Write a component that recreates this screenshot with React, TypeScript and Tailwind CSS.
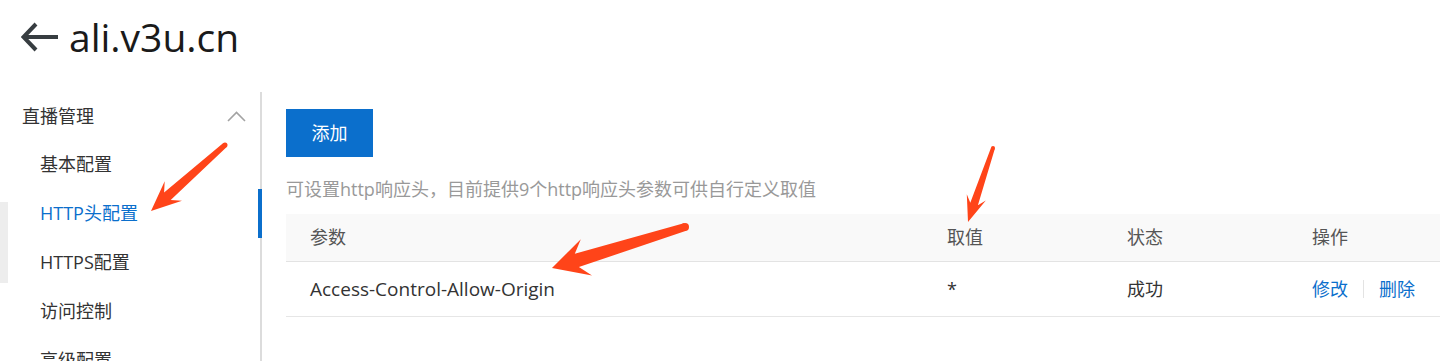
import React from 'react';

type Pt = [number, number];

// red annotation arrow: tapered shaft + barbed head
function arrowPoints(tail: Pt, tip: Pt, headLen: number, headHalf: number, w0: number, w1: number, notch: number) {
  const dx = tip[0] - tail[0];
  const dy = tip[1] - tail[1];
  const len = Math.hypot(dx, dy);
  const ux = dx / len;
  const uy = dy / len;
  const nx = -uy;
  const ny = ux;
  const bx = tip[0] - ux * headLen;
  const by = tip[1] - uy * headLen;
  const jx = bx + ux * notch;
  const jy = by + uy * notch;
  const pts: Pt[] = [
    [tail[0] + (nx * w0) / 2, tail[1] + (ny * w0) / 2],
    [jx + (nx * w1) / 2, jy + (ny * w1) / 2],
    [bx + nx * headHalf, by + ny * headHalf],
    tip,
    [bx - nx * headHalf, by - ny * headHalf],
    [jx - (nx * w1) / 2, jy - (ny * w1) / 2],
    [tail[0] - (nx * w0) / 2, tail[1] - (ny * w0) / 2],
  ];
  return pts.map((p) => `${p[0].toFixed(1)},${p[1].toFixed(1)}`).join(' ');
}

const arrows = [
  { tail: [225, 145] as Pt, tip: [151, 211] as Pt, head: 30, half: 13, w0: 5, w1: 10, notch: 8 },
  { tail: [993, 148] as Pt, tip: [968, 222] as Pt, head: 26, half: 10, w0: 4, w1: 8, notch: 7 },
  { tail: [685, 227] as Pt, tip: [552, 268] as Pt, head: 36, half: 19, w0: 8, w1: 14, notch: 10 },
];

const menu = [
  { label: '基本配置' },
  { label: 'HTTP头配置', active: true },
  { label: 'HTTPS配置' },
  { label: '访问控制' },
  { label: '高级配置' },
];

function Annotations() {
  return (
    <svg className="absolute inset-0 pointer-events-none" width="1440" height="361" viewBox="0 0 1440 361">
      {arrows.map((a, i) => (
        <g key={i} fill="#ff4419">
          <polygon points={arrowPoints(a.tail, a.tip, a.head, a.half, a.w0, a.w1, a.notch)} />
          <circle cx={a.tail[0]} cy={a.tail[1]} r={a.w0 / 2} />
        </g>
      ))}
    </svg>
  );
}

export default function App() {
  return (
    <div className="relative w-[1440px] h-[361px] overflow-hidden bg-white flex flex-col font-['Open_Sans','Noto_Sans_CJK_SC',sans-serif] text-[#333]">
      {/* page title */}
      <div className="h-[92px] shrink-0 pt-[18px] pl-[21px]">
        <div className="flex items-center h-[38px] gap-[11px]">
          <svg width="37" height="30" viewBox="0 0 37 30" fill="none" stroke="#373d41" strokeWidth="4" strokeLinecap="butt" strokeLinejoin="miter">
            <path d="M37 15H3" />
            <path d="M15 2L2.5 15L15 28" />
          </svg>
          <span className="text-[39px] leading-[38px] text-[#1a1a1a]">ali.v3u.cn</span>
        </div>
      </div>

      <div className="flex flex-1 min-h-0">
        {/* stray panel edge on the far left */}
        <div className="w-[8px] shrink-0 pt-[110px]">
          <div className="h-[81px] bg-[#ededed]" />
        </div>

        {/* side menu */}
        <div className="w-[254px] shrink-0 border-r-2 border-[#dcdcdc] text-[18px]">
          <div className="h-[48px] flex items-center justify-between pl-[14px] pr-[14px] text-[#333]">
            <span>直播管理</span>
            <svg width="19" height="11" viewBox="0 0 19 11" fill="none" stroke="#a3a3a3" strokeWidth="1.6">
              <path d="M1 10L9.5 1.5L18 10" />
            </svg>
          </div>
          {menu.map((m) => (
            <div
              key={m.label}
              className={`relative h-[49px] flex items-center pl-[32px] ${m.active ? 'text-[#0b6fcc]' : 'text-[#333]'}`}
            >
              {m.label}
              {m.active && <span className="absolute right-[-2px] top-0 bottom-0 w-[4px] bg-[#0b6fcc]" />}
            </div>
          ))}
        </div>

        {/* main content */}
        <div className="flex-1 pl-[24px] pt-[17px]">
          <button className="w-[87px] h-[48px] bg-[#0b6fcc] text-white text-[18px] flex items-center justify-center">
            添加
          </button>
          <div className="mt-[20px] h-[24px] leading-[24px] text-[18px] text-[#999]">
            可设置http响应头，目前提供9个http响应头参数可供自行定义取值
          </div>

          <div className="mt-[13px] text-[18px]">
            <div className="grid grid-cols-[637px_180px_185px_1fr] h-[48px] items-center pl-[24px] bg-[#f9f9f9] border-b border-[#e3e3e3] text-[#555]">
              <div>参数</div>
              <div>取值</div>
              <div>状态</div>
              <div>操作</div>
            </div>
            <div className="grid grid-cols-[637px_180px_185px_1fr] h-[55px] items-center pl-[24px] border-b border-[#e6e6e6] text-[#333]">
              <div className="text-[19px]">Access-Control-Allow-Origin</div>
              <div>*</div>
              <div>成功</div>
              <div className="flex items-center gap-[15px] text-[#0b6fcc]">
                <span>修改</span>
                <span className="w-px h-[18px] bg-[#e3e3e3]" />
                <span>删除</span>
              </div>
            </div>
          </div>
        </div>
      </div>

      <Annotations />
    </div>
  );
}
